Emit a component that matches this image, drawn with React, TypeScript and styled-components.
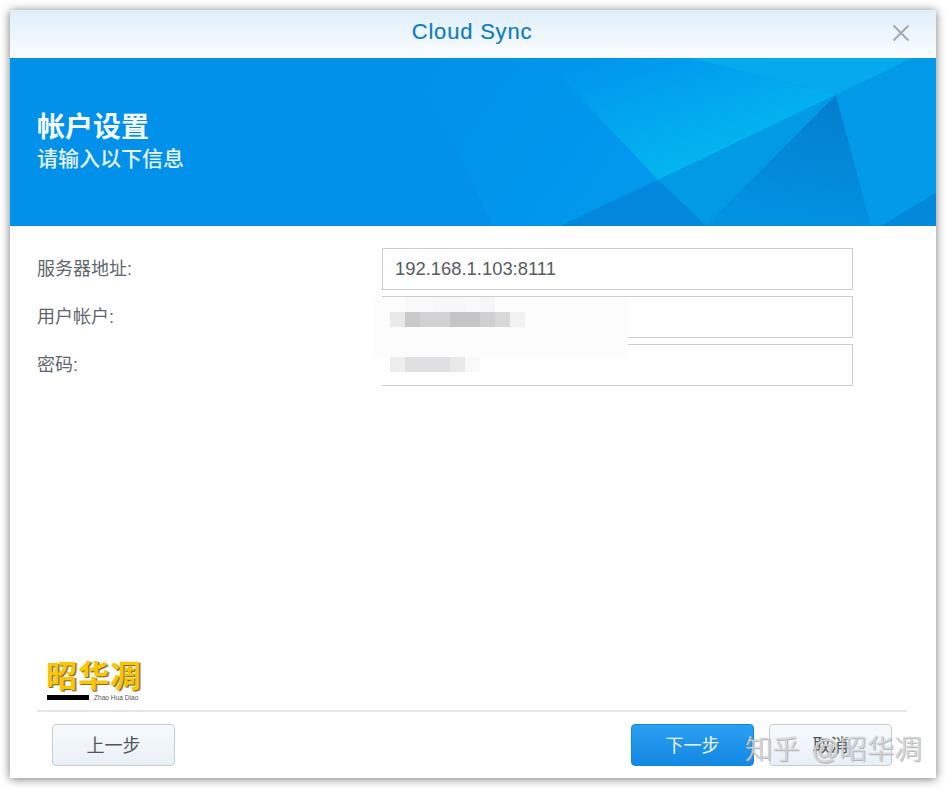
import React, { FC } from 'react';
import styled, { createGlobalStyle } from 'styled-components';

const cjk = `"Liberation Sans", "Noto Sans CJK SC", sans-serif`;

const GlobalStyle = createGlobalStyle`
  html, body {
    margin: 0;
    padding: 0;
    background: #ffffff;
  }
  * {
    box-sizing: border-box;
  }
`;

const Page = styled.div`
  width: 946px;
  height: 789px;
  padding: 10px;
  position: relative;
  overflow: hidden;
  font-family: ${cjk};
`;

const Dialog = styled.div`
  width: 926px;
  height: 768px;
  background: #ffffff;
  display: flex;
  flex-direction: column;
  box-shadow: 0 1px 9px rgba(0, 0, 0, 0.55);
`;

const TitleBar = styled.div`
  height: 48px;
  flex: none;
  display: flex;
  align-items: center;
  justify-content: center;
  position: relative;
  background: linear-gradient(#deeefa, #fbfdfe);
`;

const TitleText = styled.div`
  font-size: 22px;
  letter-spacing: 0.8px;
  color: #0f7dbd;
  margin: -4px 2px 0 0;
  -webkit-text-stroke: 0.2px #0f7dbd;
`;

const CloseButton = styled.div`
  position: absolute;
  right: 26px;
  top: 14px;
  width: 18px;
  height: 18px;
  color: #a3a7aa;
`;

const Banner = styled.div`
  height: 168px;
  flex: none;
  position: relative;
  overflow: hidden;
  background: #0190ea;
  display: flex;
  flex-direction: column;
  justify-content: center;
  padding: 0 27px;
`;

const BannerArt = styled.svg`
  position: absolute;
  inset: 0;
  width: 100%;
  height: 100%;
`;

const BannerTitle = styled.div`
  position: relative;
  font-size: 28px;
  line-height: 34px;
  font-weight: 700;
  color: #f4fafe;
`;

const BannerSub = styled.div`
  position: relative;
  font-size: 21px;
  line-height: 28px;
  font-weight: 500;
  color: #e6f4fd;
`;

const Body = styled.div`
  flex: 1;
  display: flex;
  flex-direction: column;
  position: relative;
`;

const Form = styled.div`
  flex: 1;
  display: flex;
  flex-direction: column;
  gap: 6px;
  padding: 22px 83px 0 27px;
`;

const Row = styled.div`
  display: flex;
  align-items: center;
  justify-content: space-between;
  height: 42px;
`;

const Label = styled.div`
  font-size: 18px;
  color: #5f676d;
  margin-top: -5px;
`;

const Field = styled.input`
  width: 471px;
  height: 42px;
  border: 1px solid #c9cdcf;
  background: #ffffff;
  padding: 0 12px;
  font-family: ${cjk};
  font-size: 18.4px;
  color: #565c60;
  outline: none;
`;

const RedactPatch = styled.div<{ $l: number; $t: number; $w: number; $h: number; $c: string }>`
  position: absolute;
  left: ${(p) => p.$l}px;
  top: ${(p) => p.$t}px;
  width: ${(p) => p.$w}px;
  height: ${(p) => p.$h}px;
  background: ${(p) => p.$c};
`;

const MosaicRow = styled.div<{ $l: number; $t: number }>`
  position: absolute;
  left: ${(p) => p.$l}px;
  top: ${(p) => p.$t}px;
  display: flex;
  height: 15px;
`;

const MosaicCell = styled.div<{ $w: number; $c: string }>`
  width: ${(p) => p.$w}px;
  background: ${(p) => p.$c};
`;

const Logo = styled.div`
  margin-left: 36px;
  width: 100px;
  height: 50px;
  flex: none;
  display: flex;
  flex-direction: column;
`;

const LogoMark = styled.div`
  font-family: "Noto Sans CJK SC", sans-serif;
  font-size: 31px;
  line-height: 36px;
  height: 38px;
  letter-spacing: 1px;
  font-weight: 700;
  white-space: nowrap;
  color: #f8c608;
  text-shadow: 1px 1px 0 #8a6a18, 2px 1px 0 #c0ae84;
`;

const LogoFoot = styled.div`
  display: flex;
  align-items: center;
  gap: 5px;
  margin-left: 1px;
`;

const LogoBar = styled.div`
  width: 42px;
  height: 5px;
  background: #000000;
`;

const LogoCaption = styled.div`
  font-size: 6.6px;
  color: #555;
  white-space: nowrap;
`;

const Divider = styled.div`
  height: 2px;
  flex: none;
  margin: 4px 29px 0 27px;
  background: #e3e5e6;
`;

const Footer = styled.div`
  height: 66px;
  flex: none;
  display: flex;
  align-items: flex-start;
  padding: 12px 44px 0 42px;
  gap: 15px;
`;

const Button = styled.div<{ $primary?: boolean; $push?: boolean }>`
  width: 123px;
  height: 42px;
  border-radius: 4px;
  display: flex;
  align-items: center;
  justify-content: center;
  font-size: 18px;
  padding-bottom: 3px;
  margin-left: ${(p) => (p.$push ? 'auto' : '0')};
  color: ${(p) => (p.$primary ? '#f2f9fe' : '#50565a')};
  border: 1px solid ${(p) => (p.$primary ? '#0f86d8' : '#c6ced4')};
  background: ${(p) =>
    p.$primary ? 'linear-gradient(#2b9ff0, #1388e4)' : 'linear-gradient(#f6fafd, #e9f0f5)'};
`;

const Watermark = styled.div`
  position: absolute;
  left: 745px;
  top: 731px;
  font-size: 27.5px;
  line-height: 38px;
  font-weight: 300;
  word-spacing: 4px;
  white-space: nowrap;
  color: rgba(255, 255, 255, 0.6);
  text-shadow: 0 0 1px #909090, 1px 1px 0 rgba(150, 150, 150, 0.6);
`;

const topRow = [
  { w: 30, c: '#f9f9f9' },
  { w: 30, c: '#f7f7f8' },
  { w: 15, c: '#f9f9fa' },
  { w: 15, c: '#f6f6f7' },
];

const blurOne = [
  { w: 15, c: '#e9e9ea' },
  { w: 15, c: '#c9c9cc' },
  { w: 30, c: '#d2d2d5' },
  { w: 30, c: '#c5c5c8' },
  { w: 15, c: '#d0d0d2' },
  { w: 15, c: '#d8d8da' },
  { w: 15, c: '#f1f2f2' },
];

const blurTwo = [
  { w: 15, c: '#eeeeef' },
  { w: 45, c: '#e0e0e2' },
  { w: 15, c: '#e9e9ea' },
  { w: 15, c: '#f9f9f9' },
];

const Redaction: FC = () => (
  <>
    <RedactPatch $l={365} $t={71} $w={253} $h={60} $c="#fcfcfd" />
    <RedactPatch $l={372} $t={131} $w={110} $h={28} $c="#ffffff" />
    <MosaicRow $l={395} $t={71}>
      {topRow.map((b, i) => (
        <MosaicCell key={i} $w={b.w} $c={b.c} />
      ))}
    </MosaicRow>
    <MosaicRow $l={380} $t={86}>
      {blurOne.map((b, i) => (
        <MosaicCell key={i} $w={b.w} $c={b.c} />
      ))}
    </MosaicRow>
    <MosaicRow $l={380} $t={131}>
      {blurTwo.map((b, i) => (
        <MosaicCell key={i} $w={b.w} $c={b.c} />
      ))}
    </MosaicRow>
  </>
);

export default function App() {
  return (
    <Page>
      <GlobalStyle />
      <Dialog>
        <TitleBar>
          <TitleText>Cloud Sync</TitleText>
          <CloseButton>
            <svg width="18" height="18" viewBox="0 0 18 18">
              <path d="M1.5 1.5 L16.5 16.5 M16.5 1.5 L1.5 16.5" stroke="currentColor" strokeWidth="1.8" fill="none" />
            </svg>
          </CloseButton>
        </TitleBar>
        <Banner>
          <BannerArt viewBox="0 0 926 168" preserveAspectRatio="none">
            <defs>
              <linearGradient id="centre" gradientUnits="userSpaceOnUse" x1="600" y1="0" x2="640" y2="125">
                <stop offset="0" stopColor="#0196ee" />
                <stop offset="1" stopColor="#03b6ef" />
              </linearGradient>
              <linearGradient id="side" x1="0" y1="0" x2="1" y2="0.5">
                <stop offset="0" stopColor="#0191ea" />
                <stop offset="1" stopColor="#0198ee" />
              </linearGradient>
              <linearGradient id="deep" x1="0.7" y1="0" x2="0.5" y2="1">
                <stop offset="0" stopColor="#047dcd" />
                <stop offset="1" stopColor="#0292e2" />
              </linearGradient>
            </defs>
            <polygon points="403,0 533,0 648,122 550,168 483,168" fill="url(#side)" />
            <polygon points="533,0 680,0 826,37 648,122" fill="url(#centre)" />
            <polygon points="680,0 903,0 826,37" fill="#06a9ec" />
            <polygon points="903,0 926,0 926,135 826,37" fill="#029ae8" />
            <polygon points="826,37 648,122 696,168" fill="#0299e5" />
            <polygon points="826,37 696,168 861,168" fill="url(#deep)" />
            <polygon points="826,37 861,168 871,168 926,135" fill="#029ae9" />
            <polygon points="871,168 926,135 926,168" fill="#0289da" />
            <polygon points="648,122 550,168 696,168" fill="#0387dc" />
          </BannerArt>
          <BannerTitle>帐户设置</BannerTitle>
          <BannerSub>请输入以下信息</BannerSub>
        </Banner>
        <Body>
          <Form>
            <Row>
              <Label>服务器地址:</Label>
              <Field readOnly value="192.168.1.103:8111" />
            </Row>
            <Row>
              <Label>用户帐户:</Label>
              <Field readOnly value="" />
            </Row>
            <Row>
              <Label>密码:</Label>
              <Field readOnly value="" />
            </Row>
          </Form>
          <Redaction />
          <Logo>
            <LogoMark>昭华凋</LogoMark>
            <LogoFoot>
              <LogoBar />
              <LogoCaption>Zhao Hua Diao</LogoCaption>
            </LogoFoot>
          </Logo>
          <Divider />
          <Footer>
            <Button>上一步</Button>
            <Button $primary $push>下一步</Button>
            <Button>取消</Button>
          </Footer>
        </Body>
      </Dialog>
      <Watermark>知乎 @昭华凋</Watermark>
    </Page>
  );
}
